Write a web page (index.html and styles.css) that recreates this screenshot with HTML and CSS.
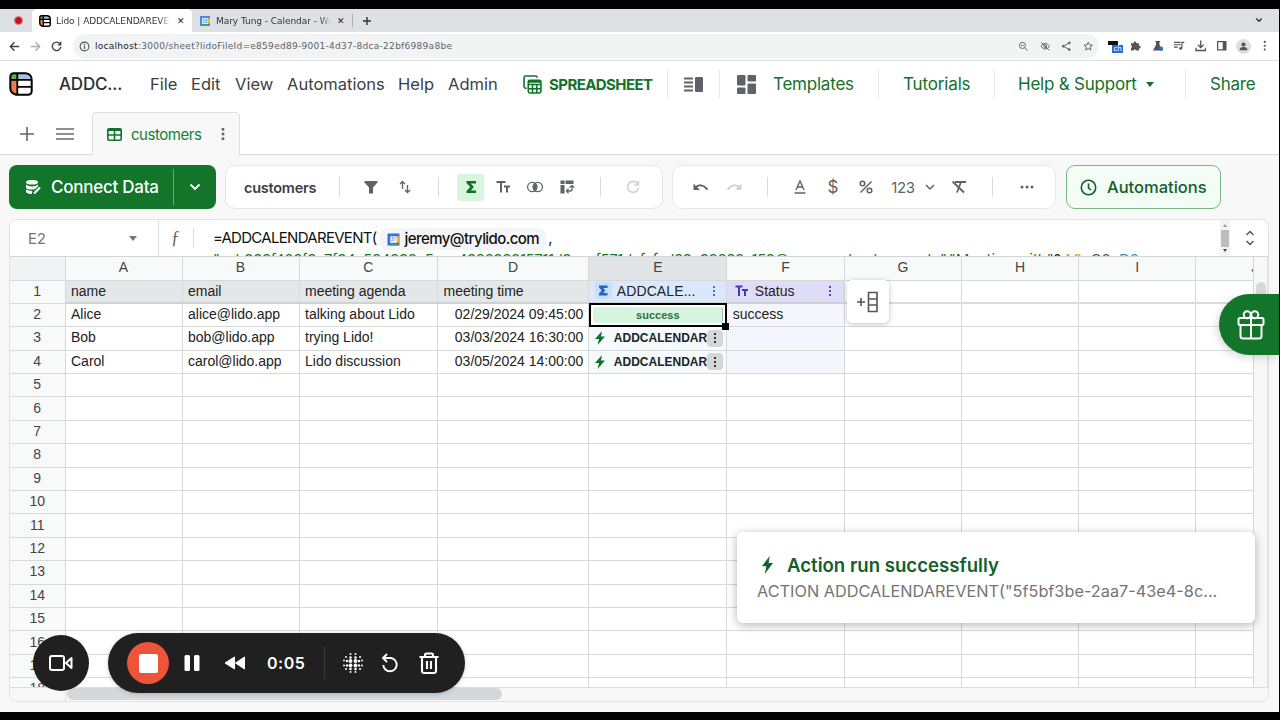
FILE: index.html
```html
<!DOCTYPE html>
<html lang="en">
<head>
    <meta charset="UTF-8">
    <meta name="viewport" content="width=device-width, initial-scale=1.0">
    <link rel="stylesheet" href="styles.css">
    <title>Lido | ADDCALENDAREVENT</title>
</head>
<body>

<div class="window">
    <div class="tab-strip">
        <div class="pinned-tab"><span class="rec-dot"></span></div>
        <div class="browser-tab active">
            <svg class="favicon" viewBox="0 0 24 24"><rect x="1.5" y="1.5" width="21" height="21" rx="5" fill="#fff"/><path d="M2 2h7v6H2z" fill="#5fae4c"/><path d="M9 2h10l3 6H9z" fill="#a9bfe4"/><path d="M2 8h7v14H5l-3-3z" fill="#ec7d50"/><path d="M8.500 2v20M2 8.500h20M8.500 15h14" stroke="#000" stroke-width="2.500"/><path d="M5 1.500h12q5.500 1 5.500 7V19q0 3.500-4 3.500H7Q1.500 21 1.500 16V5q0-3.500 3.500-3.500z" fill="none" stroke="#000" stroke-width="2.800"/></svg>
            <span class="tab-title">Lido | ADDCALENDAREVENT</span>
            <span class="tab-close">✕</span>
        </div>
        <div class="browser-tab">
            <svg class="favicon" viewBox="0 0 24 24"><path d="M2 2h20v20H2z" fill="#4285f4"/><path d="M18 7h4v10h-4z" fill="#fbbc04"/><path d="M6 18h12v4H6z" fill="#34a853"/><path d="M6 6h12v12H6z" fill="#dbe7fb"/><text x="7" y="15.500" font-size="9" fill="#4285f4" font-family="Roboto">28</text></svg>
            <span class="tab-title">Mary Tung - Calendar - Week</span>
            <span class="tab-close">✕</span>
        </div>
        <div class="new-tab">
            <svg width="10" height="10" viewBox="0 0 10 10"><path d="M5 1v8M1 5h8" stroke="#333" stroke-width="1.400"/></svg>
        </div>
        <svg class="strip-chevron" width="8" height="8" viewBox="0 0 8 8"><path d="M1.200 2.500L4 5.300l2.800-2.800" fill="none" stroke="#333" stroke-width="1.400"/></svg>
    </div>

    <div class="address-row">
        <div class="nav-buttons">
            <svg viewBox="0 0 14 14"><path d="M12 7H2.500M7 2.500L2.500 7 7 11.500" stroke="#444"/></svg>
            <svg viewBox="0 0 14 14"><path d="M2 7h9.500M7 2.500L11.500 7 7 11.500" stroke="#aaa"/></svg>
            <svg viewBox="0 0 14 14"><path d="M11 4.500A4.600 4.600 0 1 0 11.600 7.500M11.500 2v3.200H8.300" stroke="#444"/></svg>
        </div>
        <div class="address-bar">
            <svg width="11" height="11" viewBox="0 0 12 12"><circle cx="6" cy="6" r="4.800" fill="none" stroke="#555" stroke-width="1.200"/><path d="M6 5.200v3.500M6 3.100v1.200" stroke="#555" stroke-width="1.300"/></svg>
            <span class="url"><b>localhost</b>:3000/sheet?lidoFileId=e859ed89-9001-4d37-8dca-22bf6989a8be</span>
            <div class="bar-icons">
                <svg viewBox="0 0 12 12"><circle cx="5" cy="5" r="3.500"/><path d="M7.700 7.700L11 11M3.500 5h3"/></svg>
                <svg viewBox="0 0 12 12"><path d="M1 6q5-6.500 10 0-5 6.500-10 0zM1.500 1.500l9 9"/><circle cx="6" cy="6" r="1.600"/></svg>
                <svg viewBox="0 0 12 12"><path d="M9.500 2.200L2.500 6l7 3.800" /><circle cx="9.500" cy="2.200" r="1" fill="#555"/><circle cx="2.500" cy="6" r="1" fill="#555"/><circle cx="9.500" cy="9.800" r="1" fill="#555"/></svg>
                <svg viewBox="0 0 12 12"><path d="M6 1.300l1.400 3.100 3.400.3-2.600 2.200.8 3.400L6 8.500l-3 1.800.8-3.400L1.200 4.700l3.400-.3z"/></svg>
            </div>
        </div>
        <div class="extensions">
            <span class="ext-ch"><i>ch</i></span>
            <svg viewBox="0 0 12 12"><path d="M1 3.500h2.700a1.500 1.500 0 1 1 2.900 0h2.700v2.600a1.400 1.400 0 1 1 0 2.700V11H6.600a1.500 1.500 0 0 0-2.900 0H1V8.300a1.400 1.400 0 0 0 0-2.700z" fill="#555"/></svg>
            <svg viewBox="0 0 12 12"><path d="M3.500 1h5v1H7.800v3L11 11H1l3.200-6V2h-.7z" fill="#4a5560"/><circle cx="9.500" cy="9" r="2.200" fill="#2f6fd6"/></svg>
            <svg viewBox="0 0 12 12"><path d="M1 2.500h7M1 5h7M1 7.500h4M9.300 8.500V2.500h2.500" fill="none" stroke="#555" stroke-width="1.200"/><circle cx="8" cy="8.800" r="1.500" fill="#555"/></svg>
            <svg viewBox="0 0 12 12"><path d="M6 .5v7M3 5l3 3 3-3M1 8v3h10V8" fill="none" stroke="#555" stroke-width="1.400"/></svg>
            <svg viewBox="0 0 12 12"><path d="M1.700 1.700h8.600v8.600H1.700z" fill="none" stroke="#555" stroke-width="1.300"/><path d="M7 1.500h3.500v9H7z" fill="#555"/></svg>
            <svg class="avatar" viewBox="0 0 16 16"><circle cx="8" cy="8" r="8" fill="#dcdfe3"/><circle cx="8" cy="5.800" r="2.200" fill="#555"/><path d="M3.800 12q0-3.400 4.200-3.400t4.200 3.400z" fill="#555"/></svg>
            <svg viewBox="0 0 12 12"><g fill="#555"><circle cx="6" cy="2" r="1.100"/><circle cx="6" cy="6" r="1.100"/><circle cx="6" cy="10" r="1.100"/></g></svg>
        </div>
    </div>

    <div class="app-header">
        <svg class="logo" viewBox="0 0 24 24"><path d="M5 1.500h12q5.500 1 5.500 7V19q0 3.500-4 3.500H7Q1.500 21 1.500 16V5q0-3.500 3.500-3.500z" fill="#fff"/><path d="M2 3l3-1.500h3V8H2z" fill="#5fae4c"/><path d="M9 2h9l4 6H9z" fill="#a9bfe4"/><path d="M2 8h6v14H6l-4-4z" fill="#ec7d50"/><path d="M8.300 2v20M2 7.800h20M8.300 14.800h14" stroke="#000" stroke-width="1.800"/><path d="M5 1.300h12q5.700 1 5.700 7V19q0 3.700-4 3.700H7Q1.300 21 1.300 16V5q0-3.700 3.700-3.700z" fill="none" stroke="#000" stroke-width="2"/></svg>
        <span class="file-name">ADDC...</span>
        <div class="menus">
            <span class="menu-file">File</span>
            <span class="menu-edit">Edit</span>
            <span class="menu-view">View</span>
            <span class="menu-auto">Automations</span>
            <span class="menu-help">Help</span>
            <span class="menu-admin">Admin</span>
        </div>
        <div class="mode">
            <svg width="19" height="19" viewBox="0 0 18 18" fill="none" stroke="#12712b" stroke-width="1.500"><path d="M3.500 12.500H2.500Q1 12.500 1 11V2.500Q1 1 2.500 1H12q1.500 0 1.500 1.500"/><rect x="5" y="5" width="12" height="12" rx="1.500"/><path d="M5 9h12M5 13h12M9 9v8M13 9v8M5 6.500h12"/></svg>
            <b>SPREADSHEET</b>
        </div>
        <div class="layout-icon">
            <svg width="19" height="15" viewBox="0 0 19 15"><path d="M0 1.500h9M0 5.500h9M0 9.500h9M0 13.500h9" stroke="#5f6368" stroke-width="1.800"/><rect x="11" y="0" width="8" height="15" rx="1" fill="#5f6368"/></svg>
        </div>
        <div class="templates">
            <svg width="19" height="19" viewBox="0 0 19 19" fill="#5f6368"><rect width="8.500" height="10.500" rx="1"/><rect x="10.500" width="8.500" height="6.500" rx="1"/><rect y="12.500" width="8.500" height="6.500" rx="1"/><rect x="10.500" y="8.500" width="8.500" height="10.500" rx="1"/></svg>
            <span>Templates</span>
        </div>
        <div class="header-link tutorials">Tutorials</div>
        <div class="header-link support">Help &amp; Support <i class="caret"></i></div>
        <div class="header-link share">Share</div>
    </div>

    <div class="sheet-tabs">
        <svg class="add-sheet" width="14" height="14" viewBox="0 0 14 14"><path d="M7 0v14M0 7h14" stroke="#666" stroke-width="1.600"/></svg>
        <svg class="sheet-list" width="18" height="12" viewBox="0 0 18 12"><path d="M0 1h18M0 6h18M0 11h18" stroke="#6b6b6b" stroke-width="1.700"/></svg>
        <div class="sheet-tab">
            <svg width="15" height="13" viewBox="0 0 15 13" fill="none" stroke="#12712b" stroke-width="1.600"><rect x=".8" y=".8" width="13.400" height="11.400" rx="1.200"/><path d="M1 2h13" stroke-width="2"/><path d="M1 7h13M7.500 2v10"/></svg>
            <span>customers</span>
            <svg class="tab-dots" width="4" height="14" viewBox="0 0 4 14" fill="#666"><rect y="1" x=".7" width="2.600" height="2.600"/><rect y="5.700" x=".7" width="2.600" height="2.600"/><rect y="10.400" x=".7" width="2.600" height="2.600"/></svg>
        </div>
    </div>

    <div class="toolbar">
        <div class="connect">
            <div class="connect-main">
                <svg width="17" height="16" viewBox="0 0 17 16"><path d="M1 3.300Q1 1 7 1t6 2.300Q13 5.600 7 5.600T1 3.300zM1 5.400q2 2 6 2t6-2v2L10 10q-1.500.6-3 .6-6 0-6-2.300zM1 10.300q2 1.700 6.200 1.700L7 15Q1 15 1 12.600z" fill="#fff"/><path d="M9 14.500l6-6" stroke="#fff" stroke-width="2.200"/></svg>
                <span>Connect Data</span>
            </div>
            <div class="connect-more">
                <svg width="12" height="8" viewBox="0 0 12 8"><path d="M1.500 1.500L6 6l4.500-4.500" fill="none" stroke="#fff" stroke-width="1.900"/></svg>
            </div>
        </div>

        <div class="tool-group group-table">
            <b>customers</b>
            <i class="sep first"></i>
            <svg class="filter" width="24" height="24" viewBox="0 0 24 24"><path d="M5.500 6h13v1.500L14 12.500v6h-4v-6L5.500 7.500z" fill="#5f6368"/></svg>
            <svg width="24" height="24" viewBox="0 0 24 24"><path d="M9.500 14V6.500M7 9l2.500-2.500L12 9M14.500 10v7.500M12 15l2.500 2.500L17 15" fill="none" stroke="#5f6368" stroke-width="1.300"/></svg>
            <i class="sep"></i>
            <span class="tool-active"><svg width="24" height="24" viewBox="0 0 24 24"><path d="M7.500 6h9.500v2.500h-5.300L15 12l-3.300 3.500H17V18H7.500v-2l3.700-4-3.700-4z" fill="#12712b"/></svg></span>
            <svg width="24" height="24" viewBox="0 0 24 24"><path d="M5.500 7h9M10 7v10.500M13 11.500h6M16 11.500v6" fill="none" stroke="#5f6368" stroke-width="2"/></svg>
            <svg width="24" height="24" viewBox="0 0 24 24"><path d="M12 8.200a5 5 0 0 1 0 7.600 5 5 0 0 1 0-7.600z" fill="#5f6368"/><g fill="none" stroke="#5f6368" stroke-width="1.300"><circle cx="9.300" cy="12" r="4.700"/><circle cx="14.700" cy="12" r="4.700"/></g></svg>
            <svg width="24" height="24" viewBox="0 0 24 24"><path d="M5.500 5.500h4v3.500h-4zM10.500 5.500h8V9h-8zM5.500 10h4v8.500h-4z" fill="#5f6368"/><path d="M17 11.500v2.500q0 2-2 2h-3M14.500 12.500l2.500-2 2.300 2M13.500 13.800L11.500 16l2 2.200" fill="none" stroke="#5f6368" stroke-width="1.300"/></svg>
            <i class="sep"></i>
            <svg class="refresh" width="24" height="24" viewBox="0 0 24 24"><path d="M16.500 8.500A5.500 5.500 0 1 0 17.500 13M17.300 6v4h-4" fill="none" stroke="#d2d2d2" stroke-width="1.600"/></svg>
        </div>

        <div class="tool-group group-format">
            <svg width="24" height="24" viewBox="0 0 24 24"><path d="M6 13q6-6 12.500 1.500" fill="none" stroke="#5f6368" stroke-width="2"/><path d="M4.500 8.500V15H11z" fill="#5f6368"/></svg>
            <svg width="24" height="24" viewBox="0 0 24 24"><path d="M5.500 14.500Q12 7 18 13" fill="none" stroke="#d0d0d0" stroke-width="2"/><path d="M19.500 8.500V15H13z" fill="#d0d0d0"/></svg>
            <i class="sep"></i>
            <svg width="24" height="24" viewBox="0 0 24 24"><path d="M8 15l4-9 4 9M9.500 12h5M6.500 18h11" fill="none" stroke="#5f6368" stroke-width="1.400"/></svg>
            <span class="tool-text dollar">$</span>
            <svg width="24" height="24" viewBox="0 0 24 24"><g fill="none" stroke="#5f6368" stroke-width="1.500"><circle cx="8.500" cy="8.500" r="2.300"/><circle cx="15.500" cy="15.500" r="2.300"/><path d="M17.500 6.500l-11 11"/></g></svg>
            <span class="tool-text num">123</span>
            <svg class="num-arrow" width="10" height="8" viewBox="0 0 10 8"><path d="M1 2l4 4 4-4" fill="none" stroke="#5f6368" stroke-width="1.500"/></svg>
            <svg class="clear-format" width="24" height="24" viewBox="0 0 24 24"><path d="M8 7h11M14 7L10 17.500M5.500 6.500l11.500 11" fill="none" stroke="#5f6368" stroke-width="1.800"/></svg>
            <i class="sep"></i>
            <svg class="more" width="24" height="24" viewBox="0 0 24 24" fill="#5f6368"><circle cx="7" cy="12" r="1.500"/><circle cx="12" cy="12" r="1.500"/><circle cx="17" cy="12" r="1.500"/></svg>
        </div>

        <div class="automations-btn">
            <svg width="17" height="17" viewBox="0 0 17 17"><g fill="none" stroke="#12602c" stroke-width="1.600"><circle cx="8.500" cy="8.500" r="7.200"/><path d="M8.500 4.500v4.300l2.500 2.200"/></g></svg>
            <span>Automations</span>
        </div>
    </div>

    <div class="sheet">
        <div class="formula-bar">
            <div class="cell-ref"><span>E2</span><i class="caret"></i></div>
            <div class="fx">ƒ</div>
            <div class="formula">
                <div class="formula-line">=ADDCALENDAREVENT(<span class="chip"><svg width="13" height="13" viewBox="0 0 24 24"><path d="M1 1h22v22H1z" fill="#2f6fe0"/><path d="M18 6h5v12h-5z" fill="#fbbc04"/><path d="M6 18h12v5H6z" fill="#34a853"/><path d="M18 18h5l-5 5z" fill="#ea4335"/><path d="M6 6h12v12H6z" fill="#fff"/><text x="7" y="15.500" font-size="9" fill="#4285f4" font-family="Roboto">31</text></svg>jeremy@trylido.com</span>,</div>
                <div class="formula-line second"><span class="str"><span class="calendar-id">"cab998f408f9a7f94c584898c5cac498298815711d9cacf571dafcfcd89c98888c158@group.calendar.google.com</span>","Meeting with"</span>&amp;<span class="ref-a">A2</span>, <span class="ref-c">C2</span>, <span class="ref-d">D2</span></div>
            </div>
            <div class="formula-scroll"><i class="up"></i><b></b><i class="down"></i></div>
            <svg class="expand" width="10" height="16" viewBox="0 0 10 16"><path d="M1.500 5L5 1.500 8.500 5M1.500 11L5 14.500 8.500 11" fill="none" stroke="#555" stroke-width="1.500"/></svg>
        </div>

        <div class="grid-area">
            <div class="grid" id="grid">
                <div class="col-head corner"></div>
                <div class="col-head">A</div>
                <div class="col-head">B</div>
                <div class="col-head">C</div>
                <div class="col-head">D</div>
                <div class="col-head selected">E</div>
                <div class="col-head">F</div>
                <div class="col-head">G</div>
                <div class="col-head">H</div>
                <div class="col-head">I</div>
                <div class="col-head last"><span>J</span></div>

                <div class="row-head">1</div>
                <div class="cell title">name</div>
                <div class="cell title">email</div>
                <div class="cell title">meeting agenda</div>
                <div class="cell title">meeting time</div>
                <div class="cell title computed">
                    <svg width="17" height="17" viewBox="0 0 17 17"><rect width="17" height="17" rx="2" fill="#c9e0fc"/><path d="M4 3.500h8.500V6H8.200l2.100 2.500L8.200 11h4.300v2.500H4v-2l2.700-3L4 5.500z" fill="#2563d0"/></svg>
                    <span>ADDCALE...</span>
                    <i class="dots blue"></i>
                </div>
                <div class="cell title status">
                    <svg width="17" height="17" viewBox="0 0 17 17"><path d="M2.500 4.500h7M6 4.500V14M9 8h6M12 8v6" fill="none" stroke="#4338b8" stroke-width="2"/></svg>
                    <span>Status</span>
                    <i class="dots purple"></i>
                </div>
                <div class="cell line-thick"></div>
                <div class="cell line-thick"></div>
                <div class="cell line-thick"></div>
                <div class="cell line-thick"></div>

                <div class="row-head">2</div>
                <div class="cell">Alice</div>
                <div class="cell">alice@lido.app</div>
                <div class="cell">talking about Lido</div>
                <div class="cell date">02/29/2024 09:45:00</div>
                <div class="cell action-cell"><div class="selection"><span class="result">success</span></div></div>
                <div class="cell status-cell">success</div>
                <div class="cell"></div><div class="cell"></div><div class="cell"></div><div class="cell"></div>

                <div class="row-head">3</div>
                <div class="cell">Bob</div>
                <div class="cell">bob@lido.app</div>
                <div class="cell">trying Lido!</div>
                <div class="cell date">03/03/2024 16:30:00</div>
                <div class="cell action-cell"><svg class="bolt" viewBox="0 0 10 14"><path d="M7 0L0 8h4l-1.500 6L10 5.500H6z"/></svg><span class="action-name">ADDCALENDAR</span><span class="action-more"><i class="dots"></i></span></div>
                <div class="cell status-cell"></div>
                <div class="cell"></div><div class="cell"></div><div class="cell"></div><div class="cell"></div>

                <div class="row-head">4</div>
                <div class="cell">Carol</div>
                <div class="cell">carol@lido.app</div>
                <div class="cell">Lido discussion</div>
                <div class="cell date">03/05/2024 14:00:00</div>
                <div class="cell action-cell"><svg class="bolt" viewBox="0 0 10 14"><path d="M7 0L0 8h4l-1.500 6L10 5.500H6z"/></svg><span class="action-name">ADDCALENDAR</span><span class="action-more"><i class="dots"></i></span></div>
                <div class="cell status-cell"></div>
                <div class="cell"></div><div class="cell"></div><div class="cell"></div><div class="cell"></div>
            </div>
            <div class="v-scroll"><span></span></div>
        </div>
        <div class="h-scroll"><span></span></div>
    </div>
</div>

<div class="add-column">
    <svg width="22" height="22" viewBox="0 0 22 22" fill="none" stroke="#555" stroke-width="1.600"><path d="M0 11h8M4 7v8"/><path d="M11.500 1.500h8.500v19h-8.500zM11.500 8h8.500M11.500 14h8.500"/></svg>
</div>

<div class="gift">
    <svg width="28" height="30" viewBox="0 0 28 30" fill="none" stroke="#fff" stroke-width="2"><rect x="1.500" y="8" width="25" height="7" rx="1.500"/><path d="M3.500 15v11q0 2.500 2.500 2.500h16q2.500 0 2.500-2.500V15M14 8v20"/><circle cx="10.200" cy="4.700" r="3.500"/><circle cx="17.800" cy="4.700" r="3.500"/></svg>
</div>

<div class="toast">
    <div class="toast-title">
        <svg width="11" height="18" viewBox="0 0 10 14" preserveAspectRatio="none"><path d="M7 0L0 8h4l-1.500 6L10 5.500H6z" fill="#12602c"/></svg>
        <span>Action run successfully</span>
    </div>
    <div class="toast-text">ACTION ADDCALENDAREVENT("5f5bf3be-2aa7-43e4-8c...</div>
</div>

<div class="camera">
    <svg width="24" height="16" viewBox="0 0 24 16" fill="none" stroke="#fff" stroke-width="2"><rect x="1" y="1" width="14" height="14" rx="2"/><path d="M22.500 3v10l-5.500-5z" stroke-linejoin="round"/></svg>
</div>
<div class="recorder">
    <span class="stop"><i></i></span>
    <svg class="pause" width="16" height="16" viewBox="0 0 16 16" fill="#fff"><rect x=".5" width="5.500" height="16" rx="1.500"/><rect x="10" width="5.500" height="16" rx="1.500"/></svg>
    <svg class="rewind" width="22" height="14" viewBox="0 0 22 14" fill="#fff" stroke="#fff" stroke-linejoin="round"><path d="M10.500 1v12L1 7zM20.500 1v12L11.500 7z"/></svg>
    <span class="time">0:05</span>
    <i class="rec-sep"></i>
    <svg class="blur-dots" width="20" height="20" viewBox="0 0 20 20" fill="#fff"><circle cx="7.500" cy="1" r="1"/><circle cx="12.500" cy="1" r="1"/><circle cx="3" cy="4" r="1"/><circle cx="7.500" cy="4.500" r="1.300"/><circle cx="12.500" cy="4.500" r="1.300"/><circle cx="17" cy="4" r="1"/><circle cx="1" cy="7.500" r="1"/><circle cx="7.500" cy="8" r="1.900"/><circle cx="12.500" cy="8" r="1.900"/><circle cx="4" cy="8" r="1.200"/><circle cx="16" cy="8" r="1.200"/><circle cx="19" cy="7.500" r="1"/><circle cx="1" cy="12.500" r="1"/><circle cx="4" cy="12.500" r="1.200"/><circle cx="7.500" cy="12.500" r="1.900"/><circle cx="12.500" cy="12.500" r="1.900"/><circle cx="16" cy="12.500" r="1.200"/><circle cx="19" cy="12.500" r="1"/><circle cx="3" cy="16" r="1"/><circle cx="7.500" cy="16" r="1.300"/><circle cx="12.500" cy="16" r="1.300"/><circle cx="17" cy="16" r="1"/><circle cx="7.500" cy="19" r="1"/><circle cx="12.500" cy="19" r="1"/></svg>
    <svg class="restart" width="18" height="20" viewBox="0 0 18 20" fill="none" stroke="#fff" stroke-width="1.900"><path d="M2 5h8a6.700 6.700 0 1 1-7.700 7M6 1L2 5l4 4"/></svg>
    <svg class="trash" width="20" height="22" viewBox="0 0 20 22" fill="none" stroke="#fff" stroke-width="2.100"><path d="M.5 5h19M6 5V3q0-1.500 1.500-1.500h5Q14 1.500 14 3v2M3 5v14q0 2 2 2h10q2 0 2-2V5M8 9v8M12 9v8"/></svg>
</div>

<script>
    // rows below the data are empty
    var grid = document.getElementById('grid');
    for (var row = 5; row <= 18; row++) {
        var head = document.createElement('div');
        head.className = 'row-head';
        head.textContent = row;
        grid.appendChild(head);
        for (var col = 0; col < 10; col++) {
            var cell = document.createElement('div');
            cell.className = 'cell';
            grid.appendChild(cell);
        }
    }
</script>

</body>
</html>
```
FILE: styles.css
```css
* {
    box-sizing: border-box;
}

body {
    margin: 0;
    padding-top: 9px;
    height: 720px;
    background-color: #000;
    font-family: Inter, "Liberation Sans", sans-serif;
    overflow: hidden;
}

svg {
    display: block;
    flex-shrink: 0;
}

.window {
    width: 1279px;
    height: 703px;
    background-color: #f8f8f8;
    overflow: hidden;
}

/* browser chrome */
.tab-strip {
    display: flex;
    height: 23px;
    background-color: #dee1e4;
    font-family: "DejaVu Sans", sans-serif;
    font-size: 9px;
    color: #333;
}

.pinned-tab {
    width: 32px;
    padding: 7px 0 0 14px;
}

.rec-dot {
    display: block;
    width: 9px;
    height: 9px;
    border: 1px solid #d68a8e;
    border-radius: 50%;
    background-color: #c5141f;
}

.browser-tab {
    display: flex;
    align-items: center;
    width: 160px;
    padding-left: 7px;
    border-radius: 5px 5px 0 0;
}

.browser-tab.active {
    background-color: #fff;
}

.favicon {
    width: 12px;
    height: 12px;
    margin-right: 5px;
}

.tab-title {
    flex-shrink: 0;
    width: 115px;
    overflow: hidden;
    white-space: nowrap;
    letter-spacing: -0.05px;
    -webkit-mask-image: linear-gradient(to right, #000 90%, transparent);
}

.tab-close {
    width: 14px;
    margin-left: 6px;
    font-size: 9px;
    color: #222;
}

.new-tab {
    display: flex;
    align-items: center;
    height: 13px;
    margin-top: 5px;
    padding-left: 9px;
    border-left: 1px solid #b0b3b6;
}

.strip-chevron {
    margin: 7px 16px 0 auto;
}

.address-row {
    display: flex;
    align-items: center;
    height: 29px;
    border-bottom: 1px solid #dcdee0;
    background-color: #fff;
}

.nav-buttons {
    display: flex;
    gap: 8px;
    width: 73px;
    padding-left: 8px;
}

.nav-buttons svg {
    width: 13px;
    height: 13px;
    fill: none;
    stroke-width: 1.5;
}

.address-bar {
    display: flex;
    align-items: center;
    width: 1026px;
    height: 24px;
    padding: 0 6px;
    border-radius: 12px;
    background-color: #f1f3f4;
}

.url {
    margin-left: 5px;
    font-family: "DejaVu Sans", sans-serif;
    font-size: 9px;
    letter-spacing: 0.28px;
    color: #606366;
}

.url b {
    font-weight: normal;
    color: #222;
}

.bar-icons {
    display: flex;
    gap: 11px;
    margin-left: auto;
}

.bar-icons svg {
    width: 10.5px;
    height: 10.5px;
    fill: none;
    stroke: #555;
}

.extensions {
    display: flex;
    align-items: center;
    gap: 10px;
    margin-left: 9px;
}

.extensions svg {
    width: 11.5px;
    height: 11.5px;
}

.extensions .avatar {
    width: 15px;
    height: 15px;
    margin: 0 -2px;
}

.ext-ch {
    width: 15px;
    height: 12px;
    margin: 2px -3px 0 0;
}

.ext-ch::before {
    content: "";
    display: block;
    width: 10px;
    height: 4px;
    background-color: #111;
}

.ext-ch i {
    display: block;
    width: 11px;
    height: 8px;
    margin-left: 4px;
    background-color: #2b6bd8;
    color: #fff;
    font-size: 7px;
    font-style: normal;
    line-height: 8px;
    text-align: center;
}

/* app header */
.app-header {
    display: flex;
    align-items: center;
    height: 48px;
    padding: 0 0 2px 9px;
    background-color: #fff;
    font-size: 17px;
    color: #3c4043;
    white-space: nowrap;
}

.logo {
    width: 24px;
    height: 24px;
}

.file-name {
    width: 91px;
    margin-left: 26px;
    font-weight: 500;
    letter-spacing: -0.2px;
    color: #2c2f33;
}

.menus {
    display: flex;
    font-size: 16.5px;
}

.menu-file { width: 41px; }
.menu-edit { width: 44px; }
.menu-view { width: 52px; }
.menu-auto { width: 111px; }
.menu-help { width: 50px; }
.menu-admin { width: 75px; }

.mode {
    display: flex;
    align-items: center;
    gap: 7px;
    width: 144px;
    font-size: 15px;
    letter-spacing: -0.58px;
    color: #12712b;
}

.layout-icon,
.templates,
.header-link {
    display: flex;
    align-items: center;
    height: 28px;
    border-left: 1px solid #e6e6e8;
    letter-spacing: -0.22px;
}

.layout-icon {
    width: 52px;
    padding-left: 16px;
}

.templates {
    gap: 17px;
    width: 159px;
    padding-left: 17px;
    color: #12712b;
}

.header-link {
    color: #12712b;
}

.tutorials {
    width: 116px;
    padding-left: 24px;
    letter-spacing: -0.15px;
}

.support {
    width: 191px;
    padding-left: 23px;
    letter-spacing: -0.22px;
}

.caret {
    border: 4px solid transparent;
    border-top: 5px solid currentColor;
    border-bottom: 0;
}

.support .caret {
    margin-left: 9px;
}

.share {
    padding-left: 24px;
}

/* sheet tabs */
.sheet-tabs {
    display: flex;
    align-items: center;
    height: 46px;
    border-bottom: 1px solid #dcdcdc;
    background-color: #fff;
}

.add-sheet {
    margin: 4px 0 0 20px;
}

.sheet-list {
    margin: 4px 0 0 22px;
}

.sheet-tab {
    display: flex;
    align-items: center;
    width: 148px;
    height: 43px;
    margin: 3px 0 -1px 18px;
    padding-left: 14px;
    border: 1px solid #dedede;
    border-bottom: 0;
    border-radius: 5px 5px 0 0;
    background-color: #f8f8f8;
    font-size: 15px;
    letter-spacing: -0.45px;
    color: #12803a;
}

.sheet-tab span {
    width: 90px;
    margin-left: 9px;
}

/* toolbar */
.toolbar {
    display: flex;
    height: 64px;
    padding: 10px 0 10px 9px;
}

.connect {
    display: flex;
    align-items: center;
    width: 207px;
    height: 44px;
    border-radius: 8px;
    background-color: #12752a;
    color: #fff;
    font-size: 17px;
    font-weight: 500;
    letter-spacing: -0.25px;
}

.connect-main {
    display: flex;
    align-items: center;
    gap: 9px;
    width: 164px;
    padding-left: 16px;
    white-space: nowrap;
}

.connect-more {
    display: flex;
    align-items: center;
    height: 36px;
    padding-left: 15px;
    border-left: 1px solid #6aa777;
}

.tool-group {
    display: flex;
    align-items: center;
    height: 44px;
    border: 1px solid #e6e6e6;
    border-radius: 10px;
    background-color: #fff;
}

.group-table {
    width: 438px;
    margin-left: 9px;
    padding-left: 18px;
}

.group-table b {
    flex-shrink: 0;
    width: 95px;
    font-size: 14.5px;
    font-weight: 600;
    letter-spacing: -0.25px;
    color: #3c4043;
}

.sep {
    flex-shrink: 0;
    width: 1px;
    height: 20px;
    background-color: #d9d9d9;
}

.group-table svg {
    margin-right: 8px;
}

.group-table .sep {
    margin: 0 18px 0 13px;
}

.group-table .sep.first {
    margin: 0 19px 0 0;
}

.group-table .filter {
    margin-right: 10px;
}

.group-table .refresh {
    margin-left: 2px;
}

.tool-active {
    display: flex;
    flex-shrink: 0;
    align-items: center;
    justify-content: center;
    width: 27px;
    height: 27px;
    margin-right: 7px;
    border-radius: 3px;
    background-color: #d8f5dd;
}

.group-table .tool-active svg {
    margin-right: 0;
}

.group-format {
    width: 384px;
    margin-left: 9px;
    padding-left: 16px;
    gap: 9px;
}

.group-format .sep {
    margin: 0 11px 0 12px;
}

.group-format .more {
    margin-left: 2px;
}

.tool-text {
    color: #5f6368;
    font-size: 17px;
    text-align: center;
}

.dollar {
    width: 24px;
}

.num {
    width: 26px;
    margin-left: 3px;
    font-size: 15px;
    letter-spacing: -0.3px;
}

.clear-format {
    margin-left: 3px;
}

.automations-btn {
    display: flex;
    align-items: center;
    gap: 10px;
    width: 155px;
    height: 44px;
    margin-left: 10px;
    padding-left: 13px;
    border: 1px solid #7ab58a;
    border-radius: 9px;
    background-color: #f3fcf5;
    color: #12602c;
    font-size: 16.5px;
    font-weight: 500;
}

/* formula bar + grid */
.sheet {
    width: 1260px;
    height: 483px;
    margin-left: 9px;
    border: 1px solid #e2e2e2;
    border-radius: 8px;
    overflow: hidden;
}

.formula-bar {
    display: flex;
    height: 37px;
    background-color: #fff;
    border-bottom: 1px solid #d5d5d5;
}

.cell-ref {
    display: flex;
    align-items: center;
    justify-content: space-between;
    width: 149px;
    padding: 0 21px 0 18px;
    border-right: 1px solid #dcdcdc;
    font-size: 15px;
    letter-spacing: -0.3px;
    color: #757575;
}

.fx {
    width: 35px;
    height: 20px;
    margin-top: 8px;
    padding-left: 12px;
    border-right: 1px solid #dcdcdc;
    font-family: "Liberation Serif", serif;
    font-size: 18px;
    line-height: 20px;
    color: #666;
}

.formula {
    flex-shrink: 0;
    width: 1010px;
    height: 36px;
    padding: 7px 0 0 19px;
    overflow: hidden;
    font-size: 15px;
    line-height: 22px;
    letter-spacing: -0.7px;
    color: #111;
    white-space: nowrap;
}

.formula-line {
    display: flex;
    align-items: center;
    height: 22px;
}

.chip {
    display: flex;
    align-items: center;
    gap: 5px;
    height: 22px;
    margin: 2px 2px 0 3px;
    padding: 0 7px;
    border-radius: 8px;
    background-color: #f3f5f7;
    font-weight: 500;
    letter-spacing: -0.56px;
}

.formula-line.second {
    display: block;
    letter-spacing: -0.05px;
}

.calendar-id {
    display: inline-block;
    width: 727px;
    letter-spacing: -0.45px;
}

.str { color: #1a7a2a; }
.ref-a { color: #d9a020; }
.ref-c { color: #5c4a8c; }
.ref-d { color: #2f9ac8; }

.formula-scroll {
    display: flex;
    flex-direction: column;
    align-items: center;
    justify-content: space-between;
    width: 10px;
    margin-left: 16px;
    padding: 4px 0;
    background-color: #f4f4f4;
}

.formula-scroll b {
    width: 8px;
    height: 17px;
    background-color: #bdbdbd;
}

.formula-scroll .up,
.formula-scroll .down {
    border: 2.5px solid transparent;
}

.formula-scroll .up {
    border-bottom: 3px solid #999;
    border-top: 0;
}

.formula-scroll .down {
    border-top: 3px solid #444;
    border-bottom: 0;
}

.expand {
    margin: 10px 0 0 15px;
}

.grid-area {
    display: flex;
    height: 431px;
    border-bottom: 1px solid #dadcde;
}

.grid {
    display: grid;
    grid-template-columns: 55.5px 117px 117px 138.5px 151.3px 138px 117.5px 117.2px 117.2px 117.2px 57.8px;
    grid-template-rows: 23.5px;
    grid-auto-rows: 23.4px;
    width: 1244px;
    overflow: hidden;
    background-color: #fff;
    font-family: "Liberation Sans", sans-serif;
    font-size: 14px;
    color: #222;
}

.col-head,
.row-head,
.cell {
    display: flex;
    align-items: center;
    border-right: 1px solid #d6d8da;
    border-bottom: 1px solid #d6d8da;
    padding-bottom: 2px;
    white-space: nowrap;
    min-width: 0;
}

.col-head,
.row-head {
    justify-content: center;
    background-color: #f8f9f9;
    color: #444;
}

.corner {
    background-color: #f0f3f4;
}

.col-head.selected {
    background-color: #e1e5e8;
}

.col-head.last {
    justify-content: flex-end;
    overflow: hidden;
}

.col-head.last span {
    margin-right: -5px;
}

.cell {
    padding-left: 5.5px;
}

.title {
    background-color: #e4e7e8;
    border-bottom: 2px solid #cfd2d5;
    padding-bottom: 1px;
}

.line-thick {
    border-bottom: 2px solid #dcdcdc;
}

.date {
    justify-content: flex-end;
    padding-right: 5px;
    padding-left: 0;
}

.computed {
    background-color: #dbe8fb;
}

.computed span {
    width: 90px;
    margin-left: 5px;
    letter-spacing: 0.1px;
}

.status {
    background-color: #dfdcf8;
}

.status span {
    width: 69px;
    margin-left: 5px;
}

.dots {
    width: 2px;
    height: 2px;
    background-color: #333;
    box-shadow: 0 -4px #333, 0 4px #333;
}

.dots.blue {
    margin-left: 6px;
    background-color: #3b78e0;
    box-shadow: 0 -4px #3b78e0, 0 4px #3b78e0;
}

.dots.purple {
    margin-left: 5px;
    background-color: #5548c8;
    box-shadow: 0 -4px #5548c8, 0 4px #5548c8;
}

.action-cell {
    position: relative;
    padding-bottom: 0;
    background-color: #f5faff;
}

.status-cell {
    background-color: #f5f5fe;
}

.selection {
    position: absolute;
    left: 0;
    top: -1px;
    z-index: 1;
    width: 138px;
    height: 24px;
    padding: 2px;
    border: 2px solid #000;
    background-color: #fff;
}

.selection::after {
    content: "";
    position: absolute;
    right: -4px;
    bottom: -5px;
    width: 7px;
    height: 7px;
    background-color: #000;
}

.result {
    display: block;
    height: 16px;
    border-right: 1px solid #9fb8a5;
    border-radius: 3px;
    background-color: #d7f5de;
    color: #2f6b42;
    font-size: 11px;
    font-weight: bold;
    line-height: 17px;
    text-align: center;
}

.bolt {
    width: 10px;
    height: 14px;
    fill: #12712b;
}

.action-name {
    width: 93px;
    margin-left: 9px;
    overflow: hidden;
    font-size: 12px;
    font-weight: bold;
}

.action-more {
    display: flex;
    align-items: center;
    justify-content: center;
    width: 16px;
    height: 17px;
    border-radius: 4px;
    background-color: #d3d7da;
}

.v-scroll {
    width: 14px;
    background-color: #f8f8f8;
    border-right: 1px solid #e2e2e2;
}

.v-scroll span {
    display: block;
    width: 10px;
    height: 60px;
    margin: 25px 0 0 2px;
    border-radius: 5px;
    background-color: #d6d9db;
}

.h-scroll {
    height: 14px;
    margin-left: 55px;
    border-left: 1px solid #e0e0e0;
    background-color: #f8f8f8;
}

.h-scroll span {
    display: block;
    width: 435px;
    height: 12px;
    margin-left: 1px;
    border-radius: 6px;
    background-color: #d5d8da;
}

/* floating elements */
.add-column {
    position: absolute;
    left: 847px;
    top: 280px;
    display: flex;
    align-items: center;
    justify-content: center;
    width: 42px;
    height: 43px;
    border-radius: 5px;
    background-color: #fff;
    box-shadow: 0 1px 5px rgba(0, 0, 0, 0.25);
}

.gift {
    position: absolute;
    left: 1219px;
    top: 294px;
    display: flex;
    align-items: center;
    width: 60px;
    height: 61px;
    padding-left: 18px;
    border-radius: 31px 0 0 31px;
    background-color: #12752a;
    box-shadow: -2px 3px 8px rgba(0, 0, 0, 0.15);
}

.toast {
    position: absolute;
    left: 737px;
    top: 532px;
    width: 518px;
    height: 91px;
    padding: 21px 20px 0;
    border-radius: 6px;
    background-color: #fff;
    box-shadow: 0 2px 10px rgba(0, 0, 0, 0.3);
}

.toast-title {
    display: flex;
    align-items: center;
    gap: 14px;
    height: 23px;
    padding-left: 5px;
    color: #12602c;
    font-size: 18.6px;
    font-weight: 600;
}

.toast-text {
    margin-top: 5px;
    color: #757575;
    font-size: 16.3px;
    line-height: 20px;
    white-space: nowrap;
}

.camera {
    position: absolute;
    left: 33px;
    top: 635px;
    display: flex;
    align-items: center;
    justify-content: center;
    width: 56px;
    height: 56px;
    border-radius: 50%;
    background-color: #202020;
}

.recorder {
    position: absolute;
    left: 108px;
    top: 633px;
    display: flex;
    align-items: center;
    width: 357px;
    height: 60px;
    padding-left: 19px;
    border-radius: 30px;
    background-color: #202020;
    box-shadow: 0 1px 4px rgba(0, 0, 0, 0.2);
}

.stop {
    display: flex;
    align-items: center;
    justify-content: center;
    width: 42px;
    height: 42px;
    border-radius: 50%;
    background-color: #ee533c;
}

.stop i {
    width: 19px;
    height: 19px;
    border-radius: 2px;
    background-color: #fff;
}

.pause { margin-left: 15px; }
.rewind { margin-left: 24px; }

.time {
    width: 57px;
    margin-left: 21px;
    color: #fff;
    font-size: 16px;
    font-weight: 600;
    letter-spacing: 0.5px;
}

.rec-sep {
    width: 1px;
    height: 32px;
    background-color: #3a3a3a;
}

.blur-dots { margin-left: 18px; }
.restart { margin-left: 18px; }
.trash { margin-left: 20px; }
```
